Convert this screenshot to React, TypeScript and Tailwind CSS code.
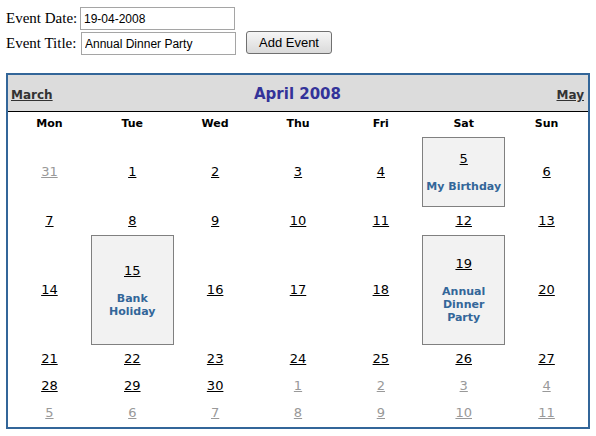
import { useState } from "react";

type Cell = { day: number; other?: boolean; event?: string };

const weeks: Cell[][] = [
  [{ day: 31, other: true }, { day: 1 }, { day: 2 }, { day: 3 }, { day: 4 }, { day: 5, event: "My Birthday" }, { day: 6 }],
  [{ day: 7 }, { day: 8 }, { day: 9 }, { day: 10 }, { day: 11 }, { day: 12 }, { day: 13 }],
  [{ day: 14 }, { day: 15, event: "Bank Holiday" }, { day: 16 }, { day: 17 }, { day: 18 }, { day: 19, event: "Annual Dinner Party" }, { day: 20 }],
  [{ day: 21 }, { day: 22 }, { day: 23 }, { day: 24 }, { day: 25 }, { day: 26 }, { day: 27 }],
  [{ day: 28 }, { day: 29 }, { day: 30 }, { day: 1, other: true }, { day: 2, other: true }, { day: 3, other: true }, { day: 4, other: true }],
  [{ day: 5, other: true }, { day: 6, other: true }, { day: 7, other: true }, { day: 8, other: true }, { day: 9, other: true }, { day: 10, other: true }, { day: 11, other: true }],
];

const dayNames = ["Mon", "Tue", "Wed", "Thu", "Fri", "Sat", "Sun"];

function DayCell({ cell }: { cell: Cell }) {
  const link = (
    <a
      href="#"
      className={`text-[13px] leading-[16px] underline ${cell.other ? "text-[#999999]" : "text-black"}`}
    >
      {cell.day}
    </a>
  );
  if (!cell.event) {
    return <div className="flex items-center justify-center">{link}</div>;
  }
  return (
    <div className="flex flex-col items-center justify-center border border-[#808080] bg-[#f2f2f2]">
      {link}
      <div className="mt-[13px] w-[77px] text-center text-[11px] font-bold leading-[13px] text-[#336699]">
        {cell.event}
      </div>
    </div>
  );
}

export default function App() {
  const [date, setDate] = useState("19-04-2008");
  const [title, setTitle] = useState("Annual Dinner Party");

  return (
    <div className="min-h-[436px] w-[596px] bg-white pl-[6px] pt-[7px] text-black">
      {/* form */}
      <div className="flex h-[23px] items-center">
        <span className="w-[74px] font-['Liberation_Serif',serif] text-[15px]">Event Date:</span>
        <input
          value={date}
          onChange={(e) => setDate(e.target.value)}
          className="h-[23px] w-[155px] border border-[#a5a5a5] px-[3px] font-['Liberation_Sans',Arial,sans-serif] text-[12px] outline-none"
        />
      </div>
      <div className="mt-[2px] flex h-[23px] items-center">
        <span className="w-[75px] font-['Liberation_Serif',serif] text-[15px]">Event Title:</span>
        <input
          value={title}
          onChange={(e) => setTitle(e.target.value)}
          className="h-[23px] w-[155px] border border-[#a5a5a5] px-[3px] font-['Liberation_Sans',Arial,sans-serif] text-[12px] outline-none"
        />
        <button className="ml-[10px] -mt-[2px] h-[23px] w-[86px] rounded-[3px] border border-[#707070] bg-gradient-to-b from-[#f6f6f6] to-[#dadada] font-['Liberation_Sans',Arial,sans-serif] text-[13px]">
          Add Event
        </button>
      </div>

      {/* calendar */}
      <div className="mt-[18px] w-[584px] border-2 border-[#336699] font-['DejaVu_Sans',Verdana,sans-serif]">
        <div className="grid h-[37px] grid-cols-[1fr_auto_1fr] items-baseline border-b border-black bg-[#dcdcdc] pl-[3px] pr-[4px] pt-[9px]">
          <a href="#" className="justify-self-start text-[12px] font-bold text-[#333333] underline">
            March
          </a>
          <span className="text-[15px] font-bold leading-[20px] text-[#333399]">April 2008</span>
          <a href="#" className="justify-self-end text-[12px] font-bold text-[#333333] underline">
            May
          </a>
        </div>
        <div className="grid grid-cols-7 grid-rows-[25px_70px_28px_110px_27px_27px_28px]">
          {dayNames.map((d) => (
            <div key={d} className="flex items-center justify-center text-[11px] font-bold">
              {d}
            </div>
          ))}
          {weeks.map((w, i) => w.map((c, j) => <DayCell key={`${i}-${j}`} cell={c} />))}
        </div>
      </div>
    </div>
  );
}
